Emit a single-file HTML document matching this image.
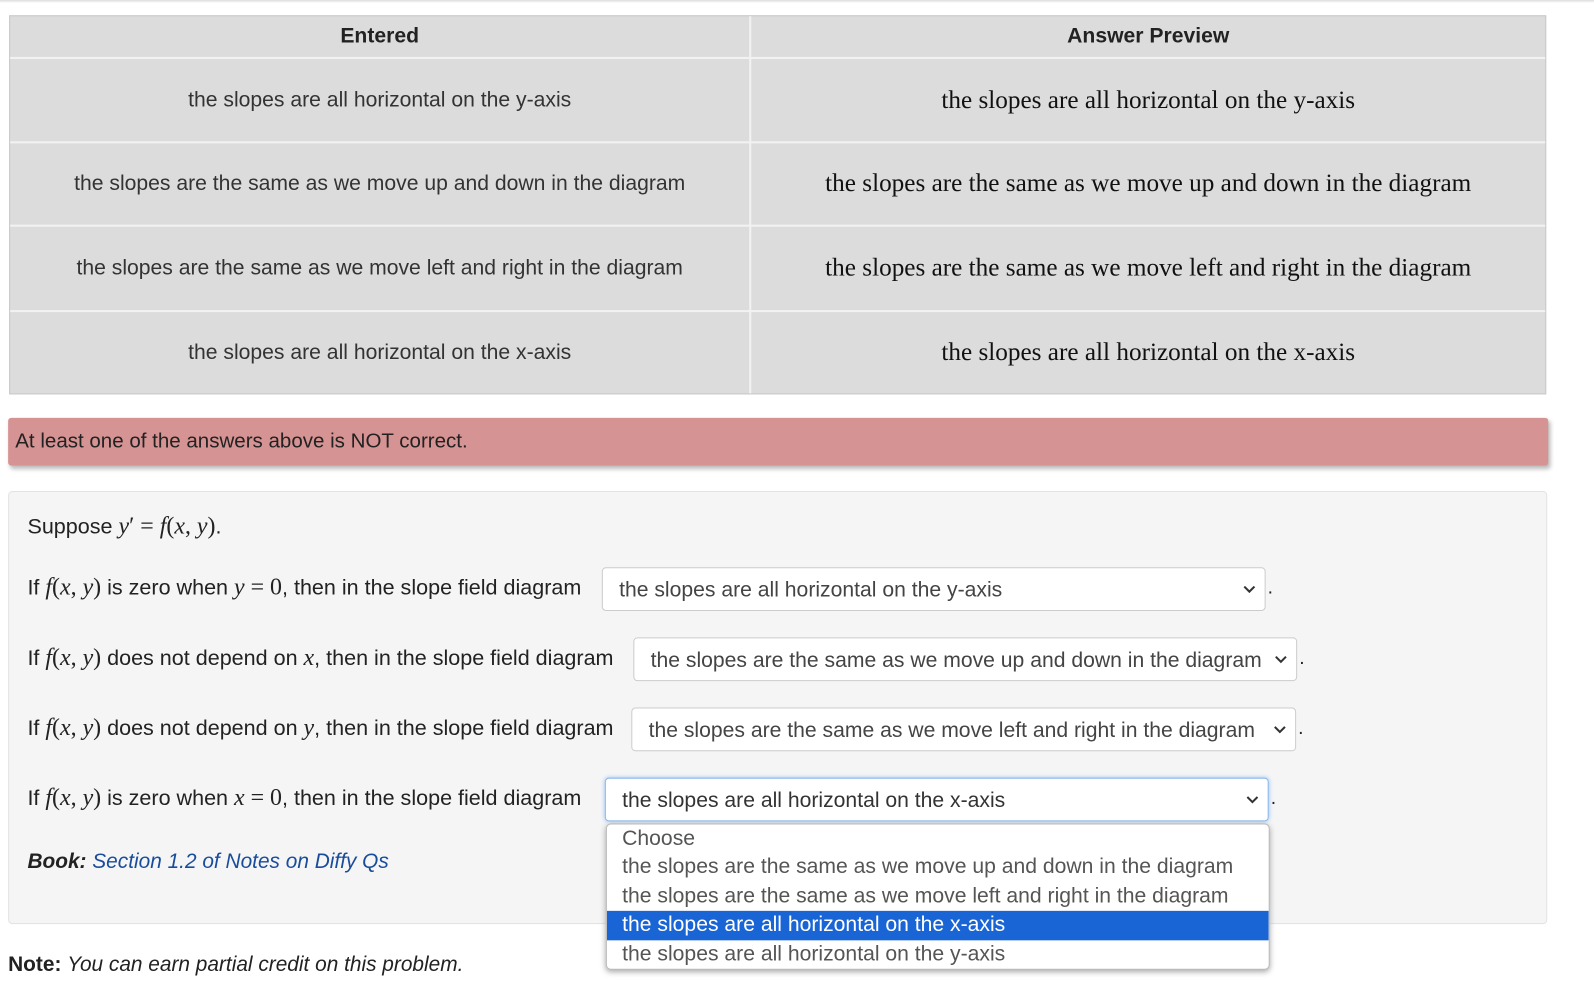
<!DOCTYPE html>
<html><head><meta charset="utf-8"><style>
body{margin:0;width:1594px;height:981px;background:#fff;font-family:"Liberation Sans",sans-serif;color:#222;overflow:hidden}
#w{position:relative;width:1568px;height:965px;transform:scale(1.01658);transform-origin:0 0}
.abs{position:absolute}
.topline{left:0;top:0;width:1568px;height:3px;background:linear-gradient(#ddd,#fff)}
.tb{left:9px;top:15px;width:1512px;height:373px;background:#dcdcdc;border:1px solid #c8c8c8;box-sizing:border-box}
.c{position:absolute;display:flex;align-items:center;justify-content:center;font-size:20.8px;color:#333;white-space:nowrap}
.c.m{font-family:"Liberation Serif",serif;font-size:24.8px;color:#111}
.hl{position:absolute;height:2px;background:#f2f2f2;left:10px;width:1510px}
.vl{position:absolute;width:2px;background:#f2f2f2;left:737px;top:16px;height:371px}
.alert{left:8px;top:411px;width:1515px;height:47px;background:#d69393;box-shadow:2px 3px 4px #bbb;border-radius:3px;font-size:20.2px;line-height:47px;text-indent:7px;color:#222}
.box{left:8px;top:483px;width:1512px;height:424px;background:#f5f5f5;border:1px solid #e3e3e3;border-radius:4px}
.ln{left:27px;font-size:21.2px;line-height:30px;white-space:nowrap}
.m2{font-family:"Liberation Serif",serif;font-style:italic;font-size:23.5px}
.mr{font-family:"Liberation Serif",serif;font-size:23.5px}
.sel{background:#fff;border:1px solid #ccc;border-radius:4px;height:43px;font-size:20.8px;line-height:43px;text-indent:16px;color:#444;box-sizing:border-box;white-space:nowrap}
.sel svg{position:absolute;right:8px;top:16px}
.dot{font-size:19px}
.dd{left:596px;top:810px;width:651px;height:142px;background:#fff;border:1px solid #bbb;border-radius:5px;box-shadow:0 2px 6px #aaa;font-size:20.8px;color:#555;overflow:hidden}
.dd div{height:28.4px;line-height:28px;padding-left:15px;white-space:nowrap}
.dd .hi{background:#1a65d6;color:#fff}
</style></head><body><div id="w">
<div class="abs topline"></div>
<div class="abs tb"></div>
<div class="hl" style="top:56px"></div><div class="hl" style="top:139px"></div><div class="hl" style="top:221px"></div><div class="hl" style="top:305px"></div>
<div class="vl"></div>
<div class="c" style="left:10px;width:727px;top:15px;height:42px;font-weight:bold;color:#222">Entered</div>
<div class="c" style="left:739px;width:781px;top:15px;height:42px;font-weight:bold;color:#222">Answer Preview</div>
<div class="c" style="left:10px;width:727px;top:57px;height:83px">the slopes are all horizontal on the y-axis</div>
<div class="c m" style="left:739px;width:781px;top:57px;height:83px">the slopes are all horizontal on the y-axis</div>
<div class="c" style="left:10px;width:727px;top:140px;height:82px">the slopes are the same as we move up and down in the diagram</div>
<div class="c m" style="left:739px;width:781px;top:140px;height:82px">the slopes are the same as we move up and down in the diagram</div>
<div class="c" style="left:10px;width:727px;top:222px;height:84px">the slopes are the same as we move left and right in the diagram</div>
<div class="c m" style="left:739px;width:781px;top:222px;height:84px">the slopes are the same as we move left and right in the diagram</div>
<div class="c" style="left:10px;width:727px;top:306px;height:82px">the slopes are all horizontal on the x-axis</div>
<div class="c m" style="left:739px;width:781px;top:306px;height:82px">the slopes are all horizontal on the x-axis</div>
<div class="abs alert">At least one of the answers above is NOT correct.</div>
<div class="abs box"></div>
<div class="abs ln" style="top:503px">Suppose <span class="m2">y</span><span class="mr">′ = </span><span class="m2">f</span><span class="mr">(</span><span class="m2">x</span><span class="mr">, </span><span class="m2">y</span><span class="mr">)</span>.</div>
<div class="abs ln" style="top:563px">If <span class="m2">f</span><span class="mr">(</span><span class="m2">x</span><span class="mr">, </span><span class="m2">y</span><span class="mr">)</span> is zero when <span class="m2">y</span><span class="mr"> = 0</span>, then in the slope field diagram</div>
<div class="abs ln" style="top:632px">If <span class="m2">f</span><span class="mr">(</span><span class="m2">x</span><span class="mr">, </span><span class="m2">y</span><span class="mr">)</span> does not depend on <span class="m2">x</span>, then in the slope field diagram</div>
<div class="abs ln" style="top:701px">If <span class="m2">f</span><span class="mr">(</span><span class="m2">x</span><span class="mr">, </span><span class="m2">y</span><span class="mr">)</span> does not depend on <span class="m2">y</span>, then in the slope field diagram</div>
<div class="abs ln" style="top:770px">If <span class="m2">f</span><span class="mr">(</span><span class="m2">x</span><span class="mr">, </span><span class="m2">y</span><span class="mr">)</span> is zero when <span class="m2">x</span><span class="mr"> = 0</span>, then in the slope field diagram</div>
<div class="abs ln" style="top:833px;font-size:20.5px"><b><i>Book:</i></b> <i style="color:#1a4c9c">Section 1.2 of Notes on Diffy Qs</i></div>
<div class="abs sel" style="left:592px;top:558px;width:653px">the slopes are all horizontal on the y-axis<svg width="14" height="10"><path d="M2 2l5 5 5-5" stroke="#333" stroke-width="2" fill="none"/></svg></div>
<div class="abs dot" style="left:1247px;top:568px">.</div>
<div class="abs sel" style="left:623px;top:627px;width:653px">the slopes are the same as we move up and down in the diagram<svg width="14" height="10"><path d="M2 2l5 5 5-5" stroke="#333" stroke-width="2" fill="none"/></svg></div>
<div class="abs dot" style="left:1278px;top:637px">.</div>
<div class="abs sel" style="left:621px;top:696px;width:654px">the slopes are the same as we move left and right in the diagram<svg width="14" height="10"><path d="M2 2l5 5 5-5" stroke="#333" stroke-width="2" fill="none"/></svg></div>
<div class="abs dot" style="left:1277px;top:706px">.</div>
<div class="abs sel" style="left:595px;top:765px;width:653px;border-color:#8cb8ec;box-shadow:0 0 4px #9cc4f4;color:#333">the slopes are all horizontal on the x-axis<svg width="14" height="10"><path d="M2 2l5 5 5-5" stroke="#333" stroke-width="2" fill="none"/></svg></div>
<div class="abs dot" style="left:1250px;top:775px">.</div>
<div class="abs dd">
<div>Choose</div>
<div>the slopes are the same as we move up and down in the diagram</div>
<div>the slopes are the same as we move left and right in the diagram</div>
<div class="hi">the slopes are all horizontal on the x-axis</div>
<div>the slopes are all horizontal on the y-axis</div>
</div>
<div class="abs ln" style="left:8px;top:934px;font-size:20.5px"><b>Note:</b> <i>You can earn partial credit on this problem.</i></div>
</div></body></html>
